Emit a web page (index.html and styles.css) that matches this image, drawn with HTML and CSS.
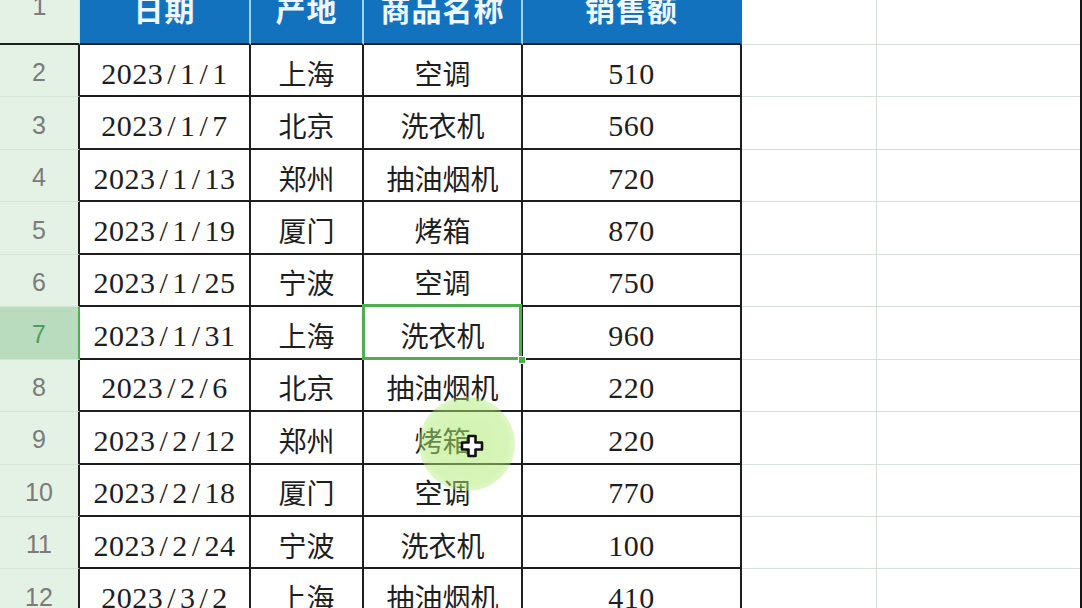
FILE: index.html
```html
<!DOCTYPE html>
<html lang="zh-CN">
<head>
<meta charset="utf-8">
<title>销售表</title>
<link rel="stylesheet" href="styles.css">
</head>
<body>
<div class="sheet">
  <div class="row head">
    <div class="rh">1</div>
    <div class="c th">日期</div>
    <div class="c th">产地</div>
    <div class="c th">商品名称</div>
    <div class="c th">销售额</div>
    <div class="c e"></div>
    <div class="c f"></div>
  </div>
  <div class="row"><div class="rh">2</div><div class="c d num">2023<span class="sl">/</span>1<span class="sl">/</span>1</div><div class="c d">上海</div><div class="c d">空调</div><div class="c d num">510</div><div class="c e"></div><div class="c f"></div></div>
  <div class="row"><div class="rh">3</div><div class="c d num">2023<span class="sl">/</span>1<span class="sl">/</span>7</div><div class="c d">北京</div><div class="c d">洗衣机</div><div class="c d num">560</div><div class="c e"></div><div class="c f"></div></div>
  <div class="row"><div class="rh">4</div><div class="c d num">2023<span class="sl">/</span>1<span class="sl">/</span>13</div><div class="c d">郑州</div><div class="c d">抽油烟机</div><div class="c d num">720</div><div class="c e"></div><div class="c f"></div></div>
  <div class="row"><div class="rh">5</div><div class="c d num">2023<span class="sl">/</span>1<span class="sl">/</span>19</div><div class="c d">厦门</div><div class="c d">烤箱</div><div class="c d num">870</div><div class="c e"></div><div class="c f"></div></div>
  <div class="row"><div class="rh">6</div><div class="c d num">2023<span class="sl">/</span>1<span class="sl">/</span>25</div><div class="c d">宁波</div><div class="c d">空调</div><div class="c d num">750</div><div class="c e"></div><div class="c f"></div></div>
  <div class="row"><div class="rh active">7</div><div class="c d num">2023<span class="sl">/</span>1<span class="sl">/</span>31</div><div class="c d">上海</div><div class="c d sel">洗衣机<span class="handle"></span></div><div class="c d num">960</div><div class="c e"></div><div class="c f"></div></div>
  <div class="row"><div class="rh">8</div><div class="c d num">2023<span class="sl">/</span>2<span class="sl">/</span>6</div><div class="c d">北京</div><div class="c d">抽油烟机</div><div class="c d num">220</div><div class="c e"></div><div class="c f"></div></div>
  <div class="row"><div class="rh">9</div><div class="c d num">2023<span class="sl">/</span>2<span class="sl">/</span>12</div><div class="c d">郑州</div><div class="c d">烤箱</div><div class="c d num">220</div><div class="c e"></div><div class="c f"></div></div>
  <div class="row"><div class="rh">10</div><div class="c d num">2023<span class="sl">/</span>2<span class="sl">/</span>18</div><div class="c d">厦门</div><div class="c d">空调</div><div class="c d num">770</div><div class="c e"></div><div class="c f"></div></div>
  <div class="row"><div class="rh">11</div><div class="c d num">2023<span class="sl">/</span>2<span class="sl">/</span>24</div><div class="c d">宁波</div><div class="c d">洗衣机</div><div class="c d num">100</div><div class="c e"></div><div class="c f"></div></div>
  <div class="row"><div class="rh">12</div><div class="c d num">2023<span class="sl">/</span>3<span class="sl">/</span>2</div><div class="c d">上海</div><div class="c d">抽油烟机</div><div class="c d num">410</div><div class="c e"></div><div class="c f"></div></div>
</div>
<div class="spot"></div>
<svg class="cursor" width="24" height="24" viewBox="0 0 24 24" aria-hidden="true">
  <path d="M8.5 2 H15.5 V8.5 H22 V15.5 H15.5 V22 H8.5 V15.5 H2 V8.5 H8.5 Z" fill="#fff" stroke="#111" stroke-width="2.6" stroke-linejoin="round"/>
</svg>
</body>
</html>
```

FILE: styles.css
```css
* { box-sizing: border-box; }

html, body {
  margin: 0;
  padding: 0;
  width: 1082px;
  height: 608px;
  overflow: hidden;
  background: #fff;
}

body {
  position: relative;
}

.sheet {
  width: 1082px;
  margin-top: -20px;
  border-right: 2px solid #151515;
  font-family: "Liberation Serif", "Noto Sans CJK SC", serif;
  color: #1e1e1e;
}

.row {
  display: grid;
  grid-template-columns: 80px 171px 113px 159px 219px 135px 1fr;
  height: 52.45px;
}

.row.head {
  height: 65px;
}

.rh {
  display: flex;
  align-items: center;
  justify-content: center;
  padding-top: 4px;
  background: #e4f2e6;
  border-bottom: 1px solid #d3e6d6;
  border-right: 2px solid #1e1e1e;
  font-family: "Liberation Sans", Arial, sans-serif;
  font-size: 25px;
  color: #7b7b7b;
}

.head .rh {
  align-items: flex-end;
  padding-top: 0;
  padding-bottom: 22px;
  border-right: 1px solid #d3e6d6;
  border-bottom: 2px solid #1e1e1e;
}

.rh.active {
  background: #b9dcbf;
  color: #4f9f5b;
  border-right-color: #4caf50;
}

.c {
  display: flex;
  align-items: center;
  justify-content: center;
  white-space: nowrap;
}

.th {
  background: #1372be;
  color: #eef7ff;
  font-family: "Noto Sans CJK SC", sans-serif;
  font-weight: 700;
  font-size: 30px;
  align-items: flex-end;
  padding-bottom: 13px;
  border-right: 2px solid #9fd3f0;
  border-bottom: 2px solid #1e1e1e;
  letter-spacing: 1px;
}

.th:nth-child(5) {
  border-right-color: #1372be;
}

.d {
  font-family: "Noto Sans CJK SC", sans-serif;
  font-size: 28px;
  padding-top: 5px;
  border-right: 2px solid #1e1e1e;
  border-bottom: 2px solid #1e1e1e;
}

.d.num {
  font-family: "Liberation Serif", serif;
  font-size: 30px;
  letter-spacing: 0.5px;
  padding-top: 7px;
}

.sl {
  margin: 0 4px;
}

.e {
  border-right: 1px solid #d6e0d9;
  border-bottom: 1px solid #d6e0d9;
}

.f {
  border-bottom: 1px solid #d6e0d9;
}

.sel {
  position: relative;
}

.sel::after {
  content: "";
  position: absolute;
  top: -3px;
  left: -2px;
  right: -1px;
  bottom: -2px;
  border: 3px solid #4caf50;
  pointer-events: none;
}

.handle {
  position: absolute;
  right: -5px;
  bottom: -6px;
  width: 8px;
  height: 8px;
  background: #4caf50;
  border: 1px solid #fff;
  z-index: 2;
}

.spot {
  position: absolute;
  left: 419px;
  top: 397px;
  width: 96px;
  height: 94px;
  border-radius: 50%;
  background: radial-gradient(circle, rgba(170, 232, 110, 0.55) 0%, rgba(175, 235, 115, 0.5) 62%, rgba(190, 240, 140, 0) 100%);
}

.cursor {
  position: absolute;
  left: 460px;
  top: 434px;
}
```
